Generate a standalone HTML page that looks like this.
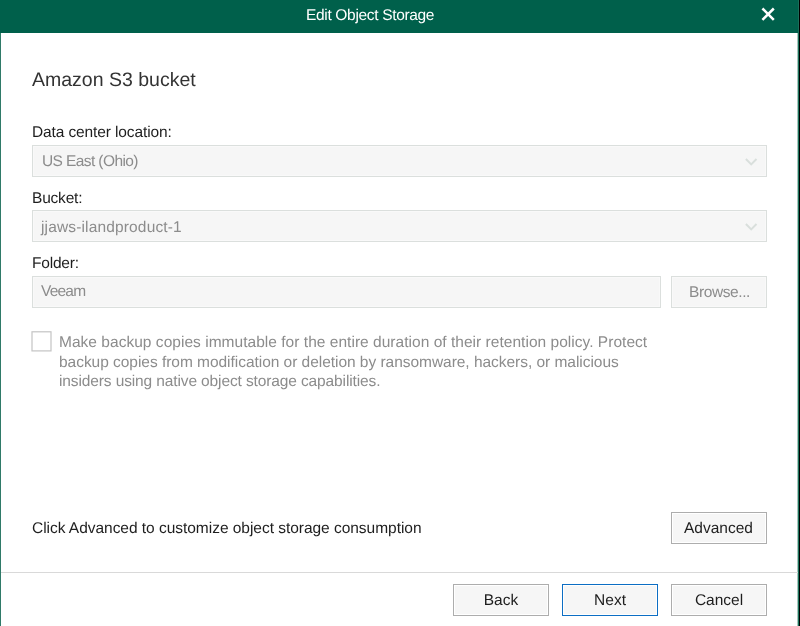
<!DOCTYPE html>
<html><head><meta charset="utf-8">
<style>
html,body{margin:0;padding:0;width:800px;height:626px;overflow:hidden;background:#fff;}
body{position:relative;font-family:"Liberation Sans",sans-serif;}
#w{position:absolute;left:0;top:0;width:800px;height:626px;}
.a{position:absolute;white-space:pre;line-height:20px;text-rendering:geometricPrecision;will-change:transform;}
.r{position:absolute;}
.box{position:absolute;box-sizing:border-box;border:1px solid #dbdfdd;background:#f6f6f6;box-shadow:inset 0 0 0 1px #f9f9f9;}
.btn{position:absolute;box-sizing:border-box;border:1px solid #adadad;background:#f6f6f6;box-shadow:inset 0 0 0 1px #fff;}
</style></head><body><div id="w">
<div class="r" style="left:0;top:0;width:800px;height:33px;background:#00604b;"></div>
<div class="r" style="left:0;top:33px;width:1px;height:593px;background:#2f7a68;"></div>
<div class="r" style="left:797px;top:33px;width:1px;height:593px;background:#a9c9bf;"></div>
<div class="r" style="left:798px;top:0;width:1px;height:626px;background:#1a6f5a;"></div>
<div class="r" style="left:799px;top:0;width:1px;height:626px;background:#000;"></div>
<svg style="position:absolute;left:761px;top:7px" width="14" height="14" viewBox="0 0 14 14"><path d="M1.4 1.5 L12.8 12.9 M12.8 1.5 L1.4 12.9" stroke="#fff" stroke-width="2.5"/></svg>

<div class="box" style="left:32px;top:145px;width:735px;height:32px;"></div>
<svg style="position:absolute;left:745px;top:157px" width="13" height="10" viewBox="0 0 13 10"><path d="M0.9 2 L6.2 7.4 L11.5 2" fill="none" stroke="#d9dfdc" stroke-width="2"/></svg>
<div class="box" style="left:32px;top:210px;width:735px;height:32px;"></div>
<svg style="position:absolute;left:745px;top:222px" width="13" height="10" viewBox="0 0 13 10"><path d="M0.9 2 L6.2 7.4 L11.5 2" fill="none" stroke="#d9dfdc" stroke-width="2"/></svg>
<div class="box" style="left:32px;top:276px;width:629px;height:32px;"></div>
<div class="box" style="left:671px;top:276px;width:96px;height:32px;"></div>
<svg style="position:absolute;left:0;top:320px" width="80" height="40"><rect x="32" y="11.8" width="19" height="19.1" fill="#fff" stroke="#c4c4c4" stroke-width="1.2"/></svg>
<div class="btn" style="left:671px;top:512px;width:96px;height:32px;"></div>
<div class="r" style="left:1px;top:572px;width:797px;height:1px;background:#d9d9d9;"></div>
<div class="btn" style="left:453px;top:584px;width:96px;height:32px;"></div>
<div class="btn" style="left:562px;top:584px;width:96px;height:32px;border-color:#0c6ec4;"></div>
<div class="btn" style="left:671px;top:584px;width:96px;height:32px;"></div>
<div class="a" style="left:306px;top:5.5px;font-size:15.5px;color:#fff;letter-spacing:-0.33px;">Edit Object Storage</div>
<div class="a" style="left:32px;top:70px;font-size:19.5px;color:#333;letter-spacing:0px;">Amazon S3 bucket</div>
<div class="a" style="left:32px;top:123px;font-size:15.5px;color:#1e1e1e;letter-spacing:-0.12px;">Data center location:</div>
<div class="a" style="left:42px;top:152px;font-size:15.5px;color:#8c8c8c;letter-spacing:-0.6px;">US East (Ohio)</div>
<div class="a" style="left:32px;top:189px;font-size:15.5px;color:#1e1e1e;letter-spacing:-0.2px;">Bucket:</div>
<div class="a" style="left:41px;top:218px;font-size:15.5px;color:#8c8c8c;letter-spacing:0.15px;">jjaws-ilandproduct-1</div>
<div class="a" style="left:32px;top:254px;font-size:15.5px;color:#1e1e1e;letter-spacing:-0.2px;">Folder:</div>
<div class="a" style="left:41px;top:282px;font-size:15.5px;color:#8c8c8c;letter-spacing:-0.8px;">Veeam</div>
<div class="a" style="left:689px;top:283px;font-size:15.5px;color:#8c8c8c;letter-spacing:-0.4px;">Browse...</div>
<div class="a" style="left:59px;top:333px;font-size:15.5px;color:#8c8c8c;letter-spacing:0.03px;">Make backup copies immutable for the entire duration of their retention policy. Protect</div>
<div class="a" style="left:59px;top:352.5px;font-size:15.5px;color:#8c8c8c;letter-spacing:-0.035px;">backup copies from modification or deletion by ransomware, hackers, or malicious</div>
<div class="a" style="left:59px;top:372px;font-size:15.5px;color:#8c8c8c;letter-spacing:-0.12px;">insiders using native object storage capabilities.</div>
<div class="a" style="left:32px;top:519px;font-size:15.5px;color:#1e1e1e;letter-spacing:-0.03px;">Click Advanced to customize object storage consumption</div>
<div class="a" style="left:684px;top:519px;font-size:15.5px;color:#1e1e1e;letter-spacing:0px;">Advanced</div>
<div class="a" style="left:453px;top:591px;font-size:15.5px;color:#1e1e1e;letter-spacing:0px;width:96px;text-align:center;">Back</div>
<div class="a" style="left:562px;top:591px;font-size:15.5px;color:#1e1e1e;letter-spacing:0px;width:96px;text-align:center;">Next</div>
<div class="a" style="left:671px;top:591px;font-size:15.5px;color:#1e1e1e;letter-spacing:0px;width:96px;text-align:center;">Cancel</div>
</div></body></html>
